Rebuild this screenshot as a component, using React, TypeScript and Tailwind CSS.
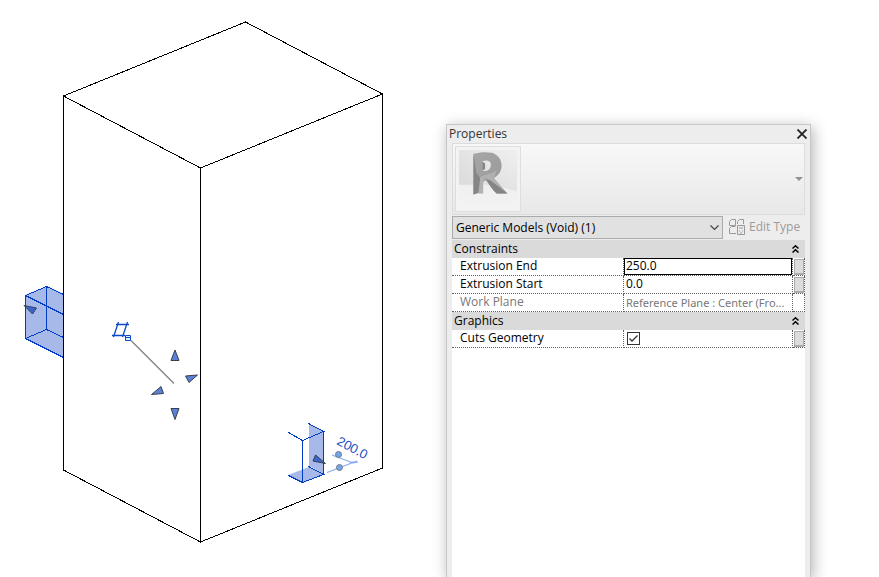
import React, { useState } from "react";

function Triangle({ points }: { points: string }) {
  return <polygon points={points} fill="#5b80d6" stroke="#38404f" strokeWidth="1" />;
}

function Drawing() {
  return (
    <svg className="block h-[577px] w-[446px]" viewBox="0 0 446 577" role="img" aria-label="Isometric model view">
      <g fill="#a6b9e8" stroke="none">
        <polygon points="25,295 47,286 64,294 64,357 25,338" />
        <polygon points="309,424 324,431 324,474 309,466" />
        <polygon points="288,475 309,467 324,474 303,483" />
      </g>
      <g fill="none" stroke="#003cc4" strokeWidth="1" shapeRendering="crispEdges">
        <path d="M63.5 294.5L46.5 286.5L25.5 295.5V338.5L63.5 357.5M25.5 295.5L63.5 314.5M46.5 286.5V329.5L25.5 338.5M46.5 329.5L63.5 337.5" />
        <path d="M288.5 432.5L302.5 440.5L323.5 431.5L308.5 423.5M302.5 440.5V482.5M323.5 431.5V474.5M288.5 475.5L302.5 482.5L323.5 474.5L308.5 466.5" />
      </g>
      <g fill="none" stroke="#000" strokeWidth="1" shapeRendering="crispEdges">
        <path d="M245.5 22L63.5 96L200.5 168L382.5 94ZM63.5 96V470L200.5 542L382.5 468V94M200.5 168V542" />
      </g>
      <polygon points="24,305.500 36.500,308 32.500,314" fill="#3c66cf" stroke="#38404f" />
      <polygon points="315.500,455 325.500,463.500 313,461" fill="#3c66cf" stroke="#38404f" />
      <path d="M131 340.500L174 383.500" stroke="#808080" strokeWidth="1.300" />
      <path d="M116 324.500H129M112 335.500H125M118.500 322L113.500 337M127.500 322L122.500 337" fill="none" stroke="#0d48c4" strokeWidth="1.300" />
      <path d="M125.500 335.500H130.500V340.500H125.500ZM125.500 337.500H130.500" fill="#d8f4ff" stroke="#0d48c4" />
      <Triangle points="175,350 171,360.500 179,360.500" />
      <Triangle points="197.500,375 185.500,376 189,382.500" />
      <Triangle points="151.500,394.500 161,386.500 163.500,393.500" />
      <Triangle points="175,419.500 171,408.500 179,408.500" />
      <path d="M332 455L353 463L358 462H349M327 472.500L357 461" fill="none" stroke="#86a9f5" strokeWidth="1.200" />
      <circle cx="338.500" cy="454.500" r="3" fill="#72a5ec" stroke="#737a86" />
      <circle cx="339.500" cy="467.500" r="3" fill="#72a5ec" stroke="#737a86" />
      <text x="336" y="444" transform="rotate(28 336 444)" fill="#1549c4" fontSize="13" fontFamily="'Liberation Sans', sans-serif">200.0</text>
    </svg>
  );
}

function Logo() {
  return (
    <svg className="size-[66px] border border-[#dedede]" viewBox="0 0 66 66" aria-hidden="true">
      <defs>
        <linearGradient id="wall" x1="0" y1="1" x2="1" y2="0"><stop stopColor="#d9d9d9" /><stop offset="1" stopColor="#efefef" /></linearGradient>
        <linearGradient id="face" x1="0" y1="0" x2="1" y2="1"><stop stopColor="#a6a6a6" /><stop offset="1" stopColor="#979797" /></linearGradient>
        <linearGradient id="floor" x1="0" y1="0" x2="0" y2="1"><stop stopColor="#e8e8e8" /><stop offset="1" stopColor="#f3f3f3" /></linearGradient>
      </defs>
      <rect width="66" height="66" fill="#f3f3f3" />
      <rect x="3" y="3" width="60" height="60" fill="url(#floor)" />
      <path d="M3 3H63V46L40 39H3Z" fill="url(#wall)" />
      <path fillRule="evenodd" d="M18 7C25 5 32 5 37 6C43 8 47 13 47 19C47 25 44 29 39 32C43 38 48 43 53 48L42 48C37 44 35 38 31 34L28 36L24 47L18 49ZM27 15V24C32 26 36 23 36 18C36 14 31 13 27 15Z" fill="url(#face)" />
      <path d="M18 7L21 27L25 32L24 47L18 49Z" fill="#858585" />
      <path d="M25 32L31 29L28 36V48L23 48Z" fill="#b2b2b2" />
      <path d="M25 31C31 28 37 28 42 24L39 32L53 48L34 34L31 32L26 35Z" fill="#b0b0b0" />
      <path d="M31 34L35 34L53 48H42C37 44 34 38 31 34Z" fill="#858585" />
      <path d="M27 15L30 17V23L27 24Z" fill="#868686" />
    </svg>
  );
}

function Section({ title, children }: { title: string; children: React.ReactNode }) {
  const [open, setOpen] = useState(true);
  return (
    <tbody>
      <tr className="h-[18px] bg-[#dadada]">
        <th colSpan={3} scope="colgroup" className="p-0 text-left font-normal">
          <button type="button" aria-expanded={open} onClick={() => setOpen(!open)} className="flex h-[18px] w-full items-center justify-between pr-[6px] pl-[2px]">
            <span>{title}</span>
            <svg className="h-[8px] w-[7px]" viewBox="0 0 7 8" fill="none" stroke="#000" strokeWidth="1.500" aria-hidden="true"><path d="M0.500 3.500L3.500 0.800L6.500 3.500M0.500 7.500L3.500 4.800L6.500 7.500" /></svg>
          </button>
        </th>
      </tr>
      {open && children}
    </tbody>
  );
}

const line = "border-dotted border-[#606060]";

function Row({ id, label, muted, children }: { id: string; label: string; muted?: boolean; children: React.ReactNode }) {
  return (
    <tr className={`h-[18px] ${muted ? "text-[#777]" : "text-black"}`}>
      <th scope="row" className={`border-r border-b p-0 pl-2 text-left font-normal ${line}`}>
        <label htmlFor={id} className="block h-[17px] leading-4">{label}</label>
      </th>
      <td className={`border-r border-b p-0 ${line}`}>{children}</td>
      <td className={`border-r border-b p-0 ${line}`}>
        {!muted && <button type="button" aria-label={`Associate ${label}`} className="ml-px block h-4 w-[10px] border border-b-2 border-[#ababab] bg-[#dcdcdc]" />}
      </td>
    </tr>
  );
}

export default function App() {
  return (
    <main className="flex h-screen justify-between overflow-hidden bg-white font-['Open_Sans','Noto_Sans',sans-serif] text-[12px] text-black">
      <Drawing />
      <aside aria-label="Properties" className="mt-[124px] mr-[68px] flex w-[365px] shrink-0 flex-col border border-b-0 border-[#c6c6c6] bg-[#ededed] px-[5px] shadow-[2px_3px_14px_rgba(0,0,0,0.3)]">
        <header className="-mx-[3px] flex h-[18px] items-center justify-between pr-px text-[#333]">
          <h2>Properties</h2>
          <button type="button" aria-label="Close">
            <svg className="size-[10px]" viewBox="0 0 10 10" stroke="#222" strokeWidth="1.800" aria-hidden="true"><path d="M0.500 0.500L9.500 9.500M9.500 0.500L0.500 9.500" /></svg>
          </button>
        </header>
        <div className="flex h-[72px] items-center justify-between border border-[#dcdcdc] bg-linear-to-b from-[#f8f8f8] to-[#e8e8e8] pl-[2px]">
          <Logo />
          <button type="button" aria-label="Choose type" className="pr-[1px]">
            <svg className="h-[4px] w-[8px]" viewBox="0 0 8 4" aria-hidden="true"><path d="M0 0H8L4 4Z" fill="#929292" /></svg>
          </button>
        </div>
        <div className="flex h-[25px] items-center">
          <div className="relative h-[23px] w-[271px]">
            <select aria-label="Selected category" className="h-full w-full appearance-none border border-[#aaa] bg-[#e1e1e1] px-[3px]">
              <option>Generic Models (Void) (1)</option>
            </select>
            <svg className="pointer-events-none absolute top-[9px] right-[4px] h-[6px] w-[9px]" viewBox="0 0 9 6" fill="none" stroke="#444" strokeWidth="1.200" aria-hidden="true"><path d="M0.500 0.500L4.500 4.500L8.500 0.500" /></svg>
          </div>
          <button type="button" disabled className="flex h-[23px] items-center gap-1 pb-[2px] pl-[6px] text-[#9b9b9b]">
            <svg className="size-4" viewBox="0 0 16 16" fill="none" stroke="#999" aria-hidden="true"><path d="M0.500 2.500L2.500 0.500H6.500V6.500H0.500ZM8.500 5V2.500L10.500 0.500H14.500V5M0.500 9.500L2.500 7.500H6.500M0.500 9.500V14.500H7M8.500 6.500H15.500V15.500H8.500ZM10 9H14M10 12H11M13 12H14M11 14H13" /></svg>
            Edit Type
          </button>
        </div>
        <div className="flex-1 bg-white">
          <table className="w-full table-fixed border-separate border-spacing-0">
            <colgroup><col /><col className="w-[169px]" /><col className="w-[12px]" /></colgroup>
            <Section title="Constraints">
              <Row id="end" label="Extrusion End"><input id="end" defaultValue="250.0" className="block h-[17px] w-full border border-black bg-white px-px pb-px outline-none" /></Row>
              <Row id="start" label="Extrusion Start"><input id="start" defaultValue="0.0" className="block h-[17px] w-full bg-white px-[2px] pb-px outline-none" /></Row>
              <Row id="plane" label="Work Plane" muted><input id="plane" readOnly value="Reference Plane : Center (Fro..." className="block h-[17px] w-full bg-white pb-px pl-[2px] font-['Noto_Sans',sans-serif] text-[11px] outline-none" /></Row>
            </Section>
            <Section title="Graphics">
              <Row id="cuts" label="Cuts Geometry">
                <span className="grid h-[17px] items-center pl-[3px]">
                  <input id="cuts" type="checkbox" defaultChecked className="peer col-start-1 row-start-1 size-[13px] appearance-none border border-[#333] bg-white" />
                  <svg className="pointer-events-none col-start-1 row-start-1 hidden size-[13px] peer-checked:block" viewBox="0 0 13 13" fill="none" stroke="#333" strokeWidth="1.300" aria-hidden="true"><path d="M2.500 6.500L5 9L10.500 3.500" /></svg>
                </span>
              </Row>
            </Section>
          </table>
        </div>
      </aside>
    </main>
  );
}
